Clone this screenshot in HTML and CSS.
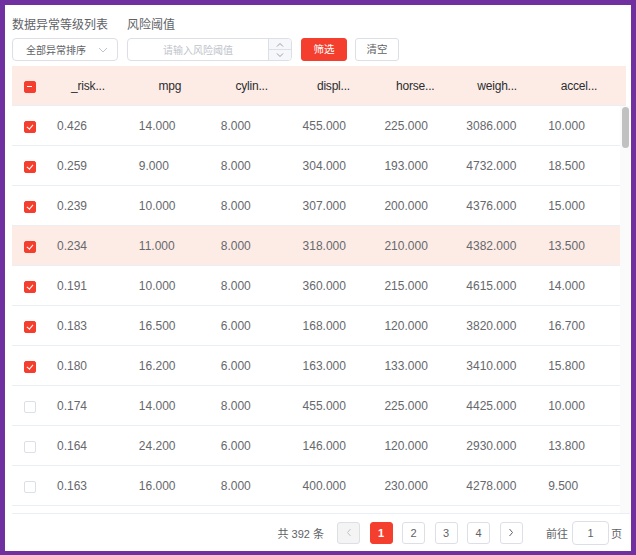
FILE: index.html
```html
<!DOCTYPE html>
<html lang="zh">
<head>
<meta charset="utf-8">
<title>数据异常等级列表</title>
<link rel="stylesheet" href="styles.css">
</head>
<body>
<div class="frame">
  <div class="toolbar">
    <div class="field">
      <div class="label">数据异常等级列表</div>
      <div class="select">
        <span>全部异常排序</span>
        <svg class="caret" width="10" height="6" viewBox="0 0 10 6"><polyline points="1,1 5,5 9,1" fill="none" stroke="#c0c4cc" stroke-width="1"/></svg>
      </div>
    </div>
    <div class="field">
      <div class="label">风险阈值</div>
      <div class="number-input">
        <span class="placeholder">请输入风险阈值</span>
        <div class="spin">
          <span class="spin-btn"><svg width="8" height="5" viewBox="0 0 8 5"><polyline points="1,4.5 4,1.5 7,4.5" fill="none" stroke="#909399" stroke-width="0.9"/></svg></span>
          <span class="spin-btn down"><svg width="8" height="5" viewBox="0 0 8 5"><polyline points="1,0.5 4,3.5 7,0.5" fill="none" stroke="#909399" stroke-width="0.9"/></svg></span>
        </div>
      </div>
    </div>
    <div class="buttons">
      <button class="btn primary">筛选</button>
      <button class="btn">清空</button>
    </div>
  </div>

  <div class="table">
    <div class="thead">
      <div class="cell check"><span class="cb indeterminate"></span></div>
      <div class="cell">_risk...</div>
      <div class="cell">mpg</div>
      <div class="cell">cylin...</div>
      <div class="cell">displ...</div>
      <div class="cell">horse...</div>
      <div class="cell">weigh...</div>
      <div class="cell">accel...</div>
    </div>
    <div class="tbody">
      <div class="rows">
        <div class="row"><div class="cell check"><span class="cb on"></span></div><div class="cell">0.426</div><div class="cell">14.000</div><div class="cell">8.000</div><div class="cell">455.000</div><div class="cell">225.000</div><div class="cell">3086.000</div><div class="cell">10.000</div></div>
        <div class="row"><div class="cell check"><span class="cb on"></span></div><div class="cell">0.259</div><div class="cell">9.000</div><div class="cell">8.000</div><div class="cell">304.000</div><div class="cell">193.000</div><div class="cell">4732.000</div><div class="cell">18.500</div></div>
        <div class="row"><div class="cell check"><span class="cb on"></span></div><div class="cell">0.239</div><div class="cell">10.000</div><div class="cell">8.000</div><div class="cell">307.000</div><div class="cell">200.000</div><div class="cell">4376.000</div><div class="cell">15.000</div></div>
        <div class="row hover"><div class="cell check"><span class="cb on"></span></div><div class="cell">0.234</div><div class="cell">11.000</div><div class="cell">8.000</div><div class="cell">318.000</div><div class="cell">210.000</div><div class="cell">4382.000</div><div class="cell">13.500</div></div>
        <div class="row"><div class="cell check"><span class="cb on"></span></div><div class="cell">0.191</div><div class="cell">10.000</div><div class="cell">8.000</div><div class="cell">360.000</div><div class="cell">215.000</div><div class="cell">4615.000</div><div class="cell">14.000</div></div>
        <div class="row"><div class="cell check"><span class="cb on"></span></div><div class="cell">0.183</div><div class="cell">16.500</div><div class="cell">6.000</div><div class="cell">168.000</div><div class="cell">120.000</div><div class="cell">3820.000</div><div class="cell">16.700</div></div>
        <div class="row"><div class="cell check"><span class="cb on"></span></div><div class="cell">0.180</div><div class="cell">16.200</div><div class="cell">6.000</div><div class="cell">163.000</div><div class="cell">133.000</div><div class="cell">3410.000</div><div class="cell">15.800</div></div>
        <div class="row"><div class="cell check"><span class="cb"></span></div><div class="cell">0.174</div><div class="cell">14.000</div><div class="cell">8.000</div><div class="cell">455.000</div><div class="cell">225.000</div><div class="cell">4425.000</div><div class="cell">10.000</div></div>
        <div class="row"><div class="cell check"><span class="cb"></span></div><div class="cell">0.164</div><div class="cell">24.200</div><div class="cell">6.000</div><div class="cell">146.000</div><div class="cell">120.000</div><div class="cell">2930.000</div><div class="cell">13.800</div></div>
        <div class="row"><div class="cell check"><span class="cb"></span></div><div class="cell">0.163</div><div class="cell">16.000</div><div class="cell">8.000</div><div class="cell">400.000</div><div class="cell">230.000</div><div class="cell">4278.000</div><div class="cell">9.500</div></div>
        <div class="row"></div>
      </div>
      <div class="scrollbar"><div class="thumb"></div></div>
    </div>
  </div>

  <div class="pager">
    <span class="total">共 392 条</span>
    <span class="pbtn disabled"><svg width="6" height="9" viewBox="0 0 6 9"><polyline points="4.5,1 1.5,4.5 4.5,8" fill="none" stroke="#c0c4cc" stroke-width="1"/></svg></span>
    <span class="pbtn active">1</span>
    <span class="pbtn">2</span>
    <span class="pbtn">3</span>
    <span class="pbtn">4</span>
    <span class="pbtn"><svg width="6" height="9" viewBox="0 0 6 9"><polyline points="1.5,1 4.5,4.5 1.5,8" fill="none" stroke="#606266" stroke-width="1"/></svg></span>
    <span class="goto">前往</span>
    <span class="jump">1</span>
    <span class="page-unit">页</span>
  </div>
</div>
</body>
</html>
```

FILE: styles.css
```css
* { box-sizing: border-box; }

html, body {
  margin: 0;
  padding: 0;
  background: #ffffff;
}

body {
  font-family: "Liberation Sans", "Noto Sans CJK SC", sans-serif;
  color: #606266;
}

.frame {
  width: 636px;
  height: 555px;
  border: 5px solid #7030a0;
  border-bottom-width: 4px;
  padding: 12px 1px 0 7px;
  background: #fff;
  overflow: hidden;
}

/* toolbar */
.toolbar {
  display: flex;
  align-items: flex-end;
  gap: 9px;
}

.field {
  display: flex;
  flex-direction: column;
}

.label {
  font-size: 12px;
  line-height: 17px;
  height: 17px;
  margin-bottom: 4px;
  color: #606266;
  white-space: nowrap;
}

.select {
  width: 106px;
  height: 23px;
  border: 1px solid #dcdfe6;
  border-radius: 4px;
  display: flex;
  align-items: center;
  justify-content: space-between;
  padding: 0 9px 0 13px;
  font-size: 10px;
  color: #606266;
}

.caret { display: block; }

.number-input {
  width: 165px;
  height: 23px;
  border: 1px solid #dcdfe6;
  border-radius: 4px;
  display: flex;
  overflow: hidden;
}

.placeholder {
  flex: 1;
  display: flex;
  align-items: center;
  justify-content: center;
  font-size: 10px;
  color: #c0c4cc;
}

.spin {
  width: 23px;
  display: flex;
  flex-direction: column;
  border-left: 1px solid #dcdfe6;
  background: #f5f7fa;
}

.spin-btn {
  flex: 1;
  display: flex;
  align-items: center;
  justify-content: center;
}

.spin-btn.down {
  border-top: 1px solid #dcdfe6;
}

.spin-btn svg { display: block; }

.buttons {
  display: flex;
  gap: 8px;
}

.btn {
  height: 23px;
  width: 46px;
  padding: 0;
  border: 1px solid #dcdfe6;
  border-radius: 3px;
  background: #fff;
  color: #606266;
  font-family: "Liberation Sans", "Noto Sans CJK SC", sans-serif;
  font-size: 10.5px;
  line-height: 21px;
}

.btn + .btn { width: 44px; }

.btn.primary {
  background: #f43f2e;
  border-color: #f43f2e;
  color: #fff;
}

/* table */
.table {
  margin-top: 5px;
  width: 618px;
}

.thead {
  width: 614px;
  height: 40px;
  display: grid;
  grid-template-columns: 35px repeat(7, 81.857px) 6px;
  align-items: center;
  background: #fdece6;
  border-bottom: 1px solid #ebeef5;
  font-size: 12px;
  color: #2b2d30;
  font-weight: 500;
}

.thead .cell {
  text-align: center;
  white-space: nowrap;
  letter-spacing: -0.2px;
}

.tbody {
  height: 408px;
  display: flex;
  overflow: hidden;
  border-bottom: 1px solid #ebeef5;
}

.rows {
  flex: 0 0 608px;
}

.scrollbar {
  flex: 0 0 10px;
  background: #fafafa;
  padding: 1px 1px 0 2px;
}

.thumb {
  height: 41px;
  background: #c1c1c1;
  border-radius: 4px;
}

.row {
  height: 40px;
  display: grid;
  grid-template-columns: 35px repeat(7, 1fr);
  align-items: center;
  border-bottom: 1px solid #ebeef5;
  font-size: 12px;
  color: #66686c;
}

.row.hover { background: #fdece6; }

.row .cell {
  padding-left: 10px;
  white-space: nowrap;
}

.row .cell.check,
.thead .cell.check {
  padding: 0;
  display: flex;
  justify-content: center;
  padding-top: 2px;
}

.cb {
  width: 12px;
  height: 12px;
  border: 1px solid #dcdfe6;
  border-radius: 2px;
  background: #fff;
  position: relative;
  display: block;
}

.cb.on {
  background: #f43f2e;
  border-color: #f43f2e;
}

.cb.on::after {
  content: "";
  position: absolute;
  left: 3.5px;
  top: 1.5px;
  width: 2.5px;
  height: 5px;
  border: solid #fff;
  border-width: 0 1.3px 1.3px 0;
  transform: rotate(40deg);
}

.cb.indeterminate {
  background: #f43f2e;
  border-color: #f43f2e;
}

.cb.indeterminate::after {
  content: "";
  position: absolute;
  left: 2.5px;
  right: 2.5px;
  top: 4.5px;
  height: 1px;
  background: #fff;
}

/* pagination */
.pager {
  margin-top: 7px;
  height: 23px;
  display: flex;
  align-items: center;
  justify-content: flex-end;
  padding-right: 8px;
  font-size: 11px;
  color: #606266;
}

.total { margin-right: 13px; }

.pbtn {
  width: 23px;
  height: 22px;
  border: 1px solid #dcdfe6;
  border-radius: 3px;
  display: flex;
  align-items: center;
  justify-content: center;
  margin-right: 9.5px;
  font-size: 11px;
  color: #606266;
  background: #fff;
}

.pbtn.disabled {
  background: #f4f4f5;
}

.pbtn.active {
  background: #f43f2e;
  border-color: #f43f2e;
  color: #fff;
  font-weight: bold;
}

.goto {
  margin-left: 14px;
  margin-right: 4px;
}

.jump {
  width: 37px;
  height: 24px;
  border: 1px solid #dcdfe6;
  border-radius: 4px;
  display: flex;
  align-items: center;
  justify-content: center;
  margin-right: 2px;
  color: #606266;
}
```
